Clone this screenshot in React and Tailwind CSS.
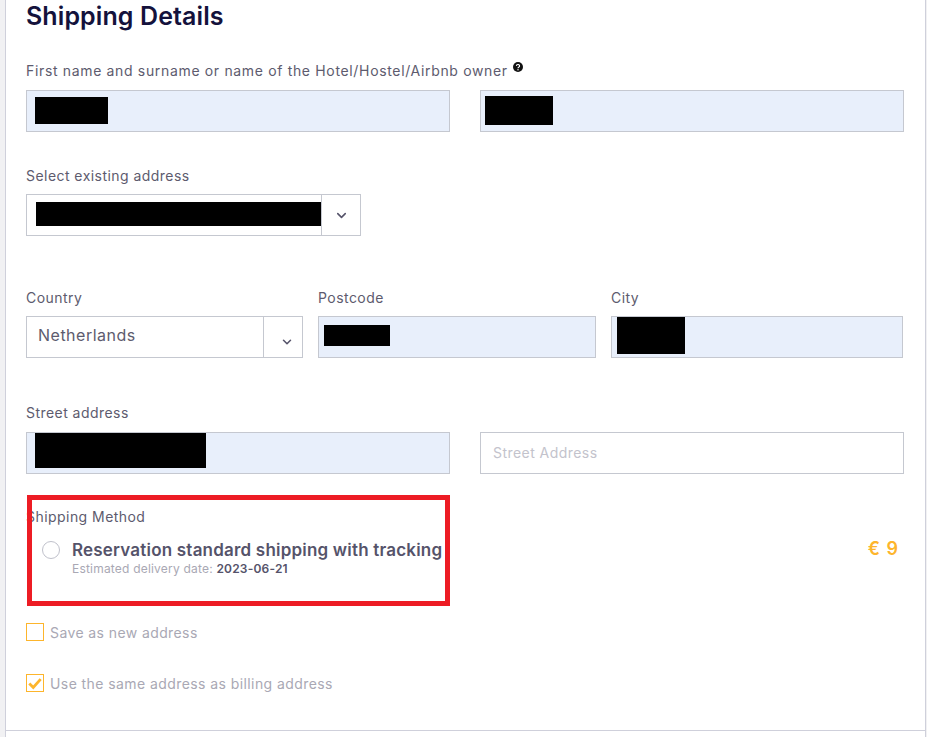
import React from "react";
import { ChevronDown } from "lucide-react";

const font = "font-['Inter','Liberation_Sans',sans-serif]";

const Redacted = ({ className }) => <div className={`bg-black shrink-0 ${className}`} />;

const Field = ({ className = "", children }) => (
  <div className={`h-[42px] border border-[#c5c8d0] bg-[#e8effb] flex items-start ${className}`}>{children}</div>
);

const Label = ({ className = "", children }) => (
  <div className={`text-[14px] leading-[20px] tracking-[0.45px] text-[#5d5b6e] ${className}`}>{children}</div>
);

const App = () => {
  return (
    <div className={`min-h-[737px] h-[737px] overflow-hidden bg-[#f1f1f3] pl-[5px] pr-[1px] ${font}`}>
      <div className="relative h-[737px] bg-white border-x border-[#cfd0db] pl-[20px] pr-[20px]">
        <h2 className="pt-[1px] text-[25px] leading-[30px] tracking-[0.1px] font-semibold text-[#14123c]">Shipping Details</h2>

        {/* Name */}
        <Label className="mt-[30px] flex tracking-[0.66px] text-[#3f3d56]">
          First name and surname or name of the Hotel/Hostel/Airbnb owner
          <svg viewBox="0 0 16 16" className="w-[10px] h-[10px] ml-[5px] mt-[1px]">
            <circle cx="8" cy="8" r="8" fill="#111" />
            <path d="M5.5 6.2a2.5 2.3 0 1 1 3.6 2.1c-.8.4-1.1.8-1.1 1.5" stroke="#fff" strokeWidth="1.8" fill="none" />
            <circle cx="8" cy="12.4" r="1.1" fill="#fff" />
          </svg>
        </Label>
        <div className="mt-[9px] grid grid-cols-[424px_424px] gap-[30px]">
          <Field className="pl-[8px] pt-[6px]">
            <Redacted className="w-[73px] h-[27px]" />
          </Field>
          <Field className="pl-[4px] pt-[5px]">
            <Redacted className="w-[68px] h-[29px]" />
          </Field>
        </div>

        {/* Existing address */}
        <Label className="mt-[34px]">Select existing address</Label>
        <div className="mt-[8px] w-[335px] h-[42px] border border-[#c5c8d0] bg-white flex">
          <div className="w-[294px] pl-[9px] pt-[7px]">
            <Redacted className="w-[285px] h-[24px]" />
          </div>
          <div className="flex-1 border-l border-[#c5c8d0] flex items-center justify-center">
            <ChevronDown size={15} strokeWidth={2.5} className="text-[#55536a]" />
          </div>
        </div>

        {/* Country row */}
        <div className="mt-[52px] grid grid-cols-[277px_278px_292px] gap-[15px]">
          <div>
            <Label>Country</Label>
            <div className="mt-[8px] h-[42px] border border-[#c5c8d0] bg-white flex">
              <div className="w-[236px] pl-[11px] pt-[6px] text-[16px] leading-[24px] tracking-[0.5px] text-[#5d5b6e]">Netherlands</div>
              <div className="flex-1 border-l border-[#c5c8d0] flex items-center justify-center pt-[9px] pl-[8px]">
                <ChevronDown size={14} strokeWidth={2.6} className="text-[#55536a]" />
              </div>
            </div>
          </div>
          <div>
            <Label>Postcode</Label>
            <Field className="mt-[8px] pl-[5px] pt-[8px]">
              <Redacted className="w-[66px] h-[21px]" />
            </Field>
          </div>
          <div>
            <Label>City</Label>
            <Field className="mt-[8px] pl-[5px]">
              <Redacted className="w-[68px] h-[37px]" />
            </Field>
          </div>
        </div>

        {/* Street */}
        <Label className="mt-[45px] tracking-[0.6px] text-[#3f3d56]">Street address</Label>
        <div className="mt-[9px] grid grid-cols-[424px_424px] gap-[30px]">
          <Field>
            <Redacted className="ml-[8px] w-[171px] h-[35px]" />
          </Field>
          <div className="h-[42px] border border-[#c5c8d0] bg-white pl-[12px] pb-[1px] flex items-center text-[14px] tracking-[0.45px] text-[#c3c3cc]">
            Street Address
          </div>
        </div>

        {/* Shipping method */}
        <Label className="mt-[33px] tracking-[0.6px] text-[#3f3d56]">Shipping Method</Label>
        <div className="mt-[12px] flex items-start">
          <div className="ml-[16px] mt-[2px] w-[18px] h-[18px] rounded-full border border-[#c0c1cb] bg-white shrink-0" />
          <div className="ml-[12px]">
            <div className="text-[17px] leading-[22px] tracking-[0.2px] font-semibold text-[#55536a]">Reservation standard shipping with tracking</div>
            <div className="text-[12px] leading-[16px] tracking-[0.2px] text-[#a9a8b4]">
              Estimated delivery date: <span className="font-semibold text-[#55536a]">2023-06-21</span>
            </div>
          </div>
          <div className="ml-auto mr-[6px] text-[18px] leading-[20px] tracking-[1px] font-semibold text-[#fdb52c]">€ 9</div>
        </div>

        {/* Checkboxes */}
        <div className="mt-[43px] flex items-center gap-[6px]">
          <div className="w-[18px] h-[18px] border border-[#fdb52c] bg-white" />
          <span className="pt-[2px] text-[14px] tracking-[0.4px] text-[#a9a8b4]">Save as new address</span>
        </div>
        <div className="mt-[28px] flex items-center gap-[6px]">
          <div className="w-[18px] h-[18px] border border-[#fdb52c] bg-white flex items-center justify-center">
            <svg viewBox="0 0 16 16" className="w-[14px] h-[14px]">
              <path d="M1.5 8.5L6 13L14.5 3.5" fill="none" stroke="#fdb52c" strokeWidth="3.2" />
            </svg>
          </div>
          <span className="pt-[2px] text-[14px] tracking-[0.42px] text-[#a9a8b4]">Use the same address as billing address</span>
        </div>

        <div className="mt-[36px] -mx-[20px] border-t border-[#cfd0db]" />

        {/* red annotation drawn over the screenshot */}
        <div className="absolute left-[21px] top-[495px] w-[423px] h-[111px] border-[5px] border-[#ed1c24] pointer-events-none" />
      </div>
    </div>
  );
};

export default App;
